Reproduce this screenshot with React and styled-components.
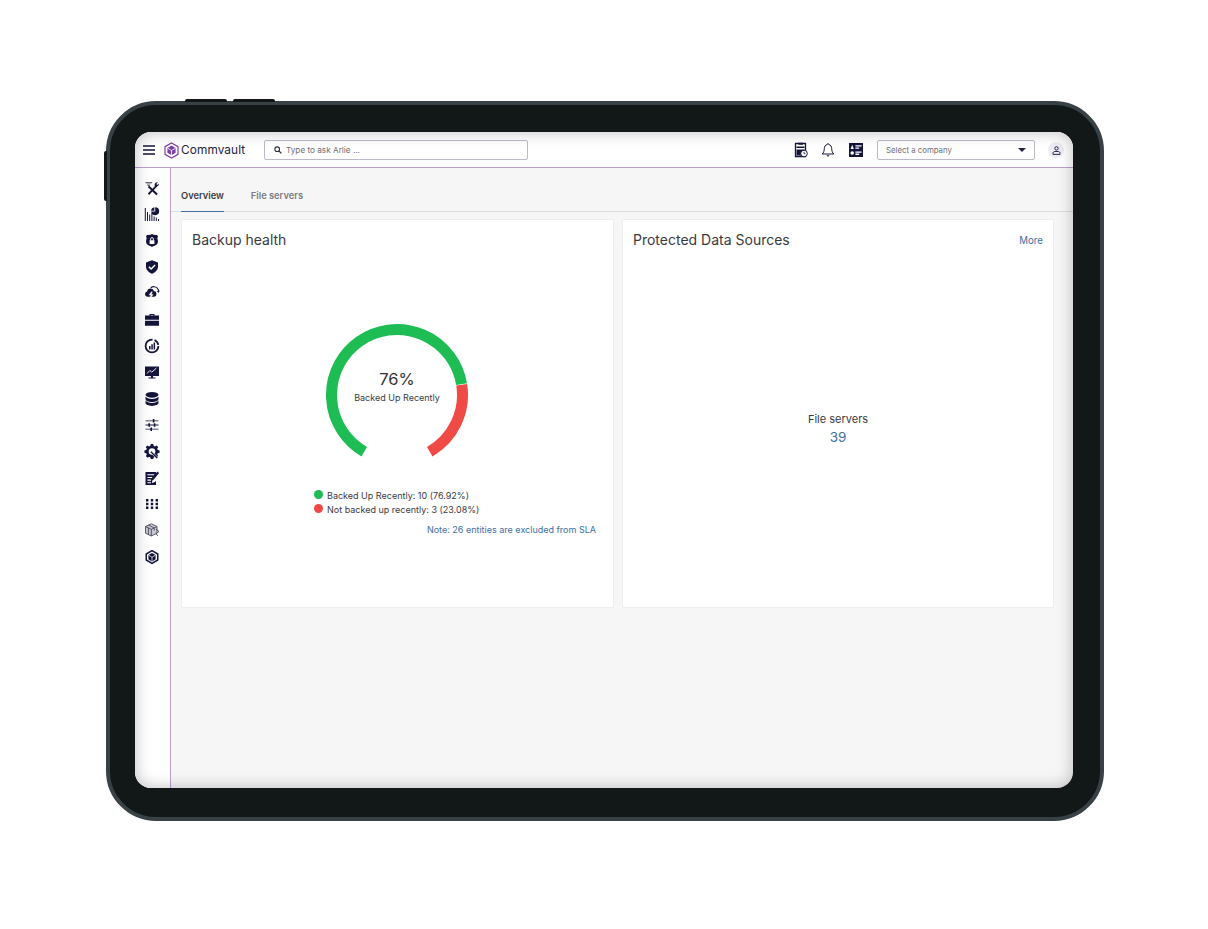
import React from "react";
import styled, { createGlobalStyle } from "styled-components";

const Global = createGlobalStyle`
  html, body { margin: 0; padding: 0; background: #fff; }
  body { font-family: Inter, "Liberation Sans", sans-serif; color: #3a3a3e; }
  * { box-sizing: border-box; }
`;

const NAVY = "#14143c";
const BLUE = "#3f6fa3";
const PURPLE = "#bb9fd2";

const Page = styled.div`
  width: 1208px;
  height: 929px;
  padding: 101px 104px 0 106px;
  overflow: hidden;
`;
const Device = styled.div`
  position: relative;
  width: 998px;
  height: 720px;
  padding: 27px 27px 29px 25px;
  background: #121718;
  border: 4px solid #384146;
  border-radius: 50px;
`;
const SideKey = styled.span`
  position: absolute;
  background: #121718;
  border-radius: 2px 2px 0 0;
  top: -6px;
  height: 3px;
  left: ${(p) => p.$left}px;
  width: ${(p) => p.$width}px;
`;
const PowerKey = styled.span`
  position: absolute;
  left: -6px;
  top: 46px;
  width: 3px;
  height: 50px;
  background: #121718;
  border-radius: 2px 0 0 2px;
`;
const Screen = styled.div`
  position: relative;
  height: 100%;
  border-radius: 16px;
  overflow: hidden;
  background: #f6f6f6;
  display: flex;
  flex-direction: column;
  &::after {
    content: "";
    position: absolute;
    inset: 0;
    border-radius: 16px;
    pointer-events: none;
    box-shadow: inset 0 0 16px rgba(0, 0, 0, 0.25);
  }
`;
const Header = styled.header`
  height: 36px;
  flex: none;
  display: flex;
  align-items: center;
  padding: 1px 9px 0 8px;
  background: #fff;
  border-bottom: 1px solid ${PURPLE};
`;
const Brand = styled.div`
  display: flex;
  align-items: center;
  margin-left: 9px;
  width: 82px;
  gap: 2px;
`;
const BrandName = styled.span`
  font-size: 11.8px;
  font-weight: 400;
  color: #22223a;
  letter-spacing: 0.12px;
`;
const Search = styled.div`
  width: 264px;
  height: 20px;
  margin-left: 18px;
  display: flex;
  align-items: center;
  gap: 3px;
  padding-left: 9px;
  border: 1px solid #bdb9ca;
  border-radius: 2px;
  font-size: 8.2px;
  color: #6d6d75;
`;
const Tools = styled.div`
  margin-left: auto;
  display: flex;
  align-items: center;
`;
const ToolIcon = styled.span`
  display: flex;
  width: 16px;
  justify-content: center;
  margin-right: ${(p) => p.$gap}px;
`;
const Select = styled.div`
  width: 158px;
  height: 20px;
  display: flex;
  align-items: center;
  justify-content: space-between;
  padding: 0 8px;
  border: 1px solid #bdb9ca;
  border-radius: 2px;
  font-size: 7.8px;
  color: #6d6d75;
`;
const Caret = styled.span`
  width: 0;
  height: 0;
  border-left: 4px solid transparent;
  border-right: 4px solid transparent;
  border-top: 4px solid #22223a;
`;
const Avatar = styled.span`
  width: 16px;
  height: 16px;
  margin-left: 13px;
  border-radius: 50%;
  background: #eeecf3;
  display: flex;
  align-items: center;
  justify-content: center;
`;
const Body = styled.div`
  flex: 1;
  display: flex;
  min-height: 0;
`;
const Sidebar = styled.nav`
  width: 36px;
  flex: none;
  background: #fff;
  border-right: 1px solid ${PURPLE};
  display: flex;
  flex-direction: column;
  align-items: center;
  padding-top: 12px;
  padding-right: 2px;
  gap: 10.35px;
`;
const Main = styled.main`
  flex: 1;
  min-width: 0;
`;
const Tabs = styled.div`
  height: 44px;
  display: flex;
  gap: 27px;
  padding-left: 10px;
  border-bottom: 1px solid #dcdcde;
`;
const Tab = styled.div`
  height: 44px;
  padding-top: 22px;
  font-size: 9.3px;
  font-weight: 600;
  color: ${(p) => (p.$active ? "#3c3c44" : "#7b7b82")};
  border-bottom: ${(p) => (p.$active ? `1px solid ${BLUE}` : "none")};
`;
const Cards = styled.div`
  display: flex;
  gap: 8px;
  padding: 7px 0 0 10px;
`;
const Card = styled.section`
  width: ${(p) => p.$width}px;
  height: 389px;
  padding: 11px 10px;
  background: #fff;
  border: 1px solid #eeeeee;
  border-radius: 2px;
  display: flex;
  flex-direction: column;
`;
const CardHead = styled.div`
  display: flex;
  justify-content: space-between;
  align-items: center;
  height: 16px;
`;
const CardTitle = styled.h2`
  margin: 0;
  font-size: 14px;
  font-weight: 400;
  color: #3a3a3e;
`;
const More = styled.a`
  margin-top: 2px;
  font-size: 9.7px;
  color: ${BLUE};
`;
const GaugeWrap = styled.div`
  position: relative;
  width: 144px;
  height: 144px;
  margin: 76px 0 0 133px;
`;
const GaugeText = styled.div`
  position: absolute;
  top: 46px;
  left: 0;
  right: 0;
  display: flex;
  flex-direction: column;
  align-items: center;
`;
const Percent = styled.span`
  font-size: 16.5px;
  line-height: 20px;
  color: #333;
`;
const GaugeLabel = styled.span`
  font-size: 9px;
  line-height: 13px;
  margin-top: 2px;
  color: #3a3a3e;
`;
const Legend = styled.ul`
  list-style: none;
  margin: 21px 0 0 122px;
  padding: 0;
`;
const LegendRow = styled.li`
  height: 14px;
  display: flex;
  align-items: center;
  gap: 4px;
  font-size: 9px;
  color: #3a3a3e;
`;
const Dot = styled.span`
  width: 9px;
  height: 9px;
  border-radius: 50%;
  background: ${(p) => p.$color};
  position: relative;
  top: -1px;
`;
const Note = styled.div`
  margin-top: 8px;
  text-align: right;
  padding-right: 7px;
  font-size: 9px;
  color: ${BLUE};
`;
const Center = styled.div`
  flex: 1;
  display: flex;
  flex-direction: column;
  align-items: center;
  padding-top: 165px;
`;
const SourceLabel = styled.span`
  font-size: 11px;
  line-height: 14px;
  color: #3a3a3e;
`;
const SourceValue = styled.span`
  font-size: 13.5px;
  line-height: 20px;
  margin-top: 1px;
  color: ${BLUE};
`;

const polar = (r, deg) => {
  const a = (deg * Math.PI) / 180;
  return [72 + r * Math.sin(a), 72 - r * Math.cos(a)];
};
const arc = (r, from, to) => {
  const [x1, y1] = polar(r, from);
  const [x2, y2] = polar(r, to);
  const large = to - from > 180 ? 1 : 0;
  return `M${x1} ${y1}A${r} ${r} 0 ${large} 1 ${x2} ${y2}`;
};

const Gauge = () => (
  <svg width="144" height="144" viewBox="0 0 144 144">
    <path d={arc(65.5, -150, 80.4)} fill="none" stroke="#1dbd54" strokeWidth="11" />
    <path d={arc(65.5, 81, 150)} fill="none" stroke="#f04a47" strokeWidth="11" />
  </svg>
);

const Ico = ({ children, s = 16 }) => (
  <svg width={s} height={s} viewBox="0 0 16 16" fill={NAVY} stroke="none" style={{ display: "block" }}>
    {children}
  </svg>
);

const Menu = () => (
  <svg width="12" height="10" viewBox="0 0 12 10" style={{ display: "block" }}>
    <path d="M0 1h12M0 5h12M0 9h12" stroke={NAVY} strokeWidth="1.6" />
  </svg>
);
const Logo = () => (
  <svg width="15" height="17" viewBox="0 0 15 17" style={{ display: "block" }}>
    <path d="M7.5 1 14 4.700v7.600L7.500 16 1 12.300V4.700Z" fill="none" stroke="#7c3fa6" strokeWidth="1.2" />
    <path d="M7.500 3.600 11.600 6v4.800L7.500 13.200 3.400 10.800V6Z" fill="#7c3fa6" />
    <path d="M3.600 6.200 7.500 8.500l4-2.300M7.500 8.500v4.600" fill="none" stroke="#fff" strokeWidth=".8" />
  </svg>
);
const SearchIco = () => (
  <svg width="8" height="8" viewBox="0 0 8 8" style={{ display: "block", margin: "0 1px 0 0" }}>
    <circle cx="3.2" cy="3.2" r="2.3" fill="none" stroke="#30303c" strokeWidth="1.1" />
    <path d="m5 5 2.400 2.400" stroke="#30303c" strokeWidth="1.3" />
  </svg>
);
const ReportClock = () => (
  <Ico>
    <path d="M2.500 1.500h10v13h-10Z" fill="none" stroke={NAVY} strokeWidth="1.3" />
    <path d="M5.500.8h4.500v2H5.500ZM3.500 4.500h8v1.600h-8ZM3.500 7.500h8v6h-8Z" />
    <circle cx="11" cy="11.500" r="3.300" fill="#fff" stroke={NAVY} strokeWidth="1" />
    <path d="M11 9.800v1.800h1.400" fill="none" stroke={NAVY} strokeWidth=".8" />
  </Ico>
);
const Bell = () => (
  <Ico>
    <path d="M8 1.600c-.5 0-.7.3-.7.8C5.200 3 4.400 4.700 4.300 6.500c-.1 2.600-.7 4.200-2 5.500h11.400c-1.300-1.300-1.900-2.900-2-5.500C11.600 4.700 10.800 3 8.700 2.400c0-.5-.2-.8-.7-.8Z" fill="none" stroke={NAVY} strokeWidth="1" />
    <path d="M6.300 13.200h3.400L8 14.800Z" />
  </Ico>
);
const Board = () => (
  <Ico>
    <rect x="1" y="1" width="14" height="14" fill={NAVY} />
    <path d="M2.600 7 4.200 2.800 5.800 7ZM7.400 3.200h6.200v1.400H7.400ZM7.400 5.400h3.800v1.400H7.400ZM7.400 9.400h6.200v1.400H7.400ZM7.400 11.600h3.800V13H7.400Z" fill="#fff" />
    <circle cx="4.200" cy="11" r="1.800" fill="#fff" />
  </Ico>
);
const User = () => (
  <svg width="9" height="9" viewBox="0 0 9 9" style={{ display: "block" }}>
    <circle cx="4.5" cy="2.4" r="1.7" fill="none" stroke={NAVY} strokeWidth=".9" />
    <path d="M1 8.400V7.200c0-1 .8-1.700 1.800-1.700h3.400c1 0 1.800.7 1.800 1.700v1.200Z" fill="none" stroke={NAVY} strokeWidth=".9" />
  </svg>
);

const sideIcons = [
  <Ico key="1">
    <path d="M1 2h7.500L7.400 3.400H2.400ZM3 4.600h3.400L5.500 6H4Z" opacity=".65" />
    <path d="m3.800 13.600 8-8.400 1.300 1.300-8 8.400Z" />
    <path d="m5 5.600 8.800 8.200-1.500 1.400L4 7.200Z" />
    <path d="M10.600 5.400c-.3-1.800 1.200-3.400 3.200-3l-1.500 1.600 1 1 1.600-1.400c.2 1.800-1.200 3.300-3 3Z" />
  </Ico>,
  <Ico key="2">
    <path d="M.8 2h1v13h-1ZM3 6h1v9H3ZM5.200 8.500h1V15h-1ZM7.400 7h1v8h-1ZM9.600 10.500h1V15h-1ZM11.800 11.500h1V15h-1ZM14 13h1v2h-1Z" />
    <path d="M11.200 1.200a4 4 0 1 1-4 4.300h4Z" />
    <path d="M10.400 1.300v3.400H7.100a3.900 3.900 0 0 1 3.300-3.400Z" />
  </Ico>,
  <Ico key="3">
    <path d="M8 1c1.600 1 3.300 1.200 5 .8l1 1.700c-.8 1.200-.7 2.200-.2 3.600.7 2.500-.4 4.900-3.200 5.600-1 .3-2 .7-2.600 1.300-.6-.6-1.600-1-2.600-1.300C2.600 12 1.500 9.600 2.200 7.100c.5-1.400.6-2.400-.2-3.600l1-1.700c1.700.4 3.400.2 5-.8Z" />
    <path d="M5.600 7.300h4.800v3.600H5.600Z" fill="#fff" />
    <path d="M6.600 7.300V6a1.400 1.400 0 0 1 2.800 0v1.300" fill="none" stroke="#fff" strokeWidth=".9" />
  </Ico>,
  <Ico key="4">
    <path d="M8 1.200 14 3.400v4.200c0 3.300-2.500 5.900-6 7.200-3.500-1.300-6-3.900-6-7.200V3.400Z" />
    <path d="m4.900 7.800 2.200 2.200 4-4" fill="none" stroke="#fff" strokeWidth="1.5" />
  </Ico>,
  <Ico key="5">
    <path d="M3.400 11.800a2.700 2.700 0 0 1-.4-5.300 3.600 3.600 0 0 1 6.900-.6 3 3 0 0 1 .3 5.900Z" />
    <path d="M7.300 6.800 5 10.100h1.700l-1 4L9.200 9.500H7.400l1-2.700Z" fill="#fff" stroke="#fff" strokeWidth=".3" />
    <path d="M6.800 2.800c1.800-1.600 4.800-1.500 6.500.3 1 1.100 1.400 2.500 1.200 3.800" fill="none" stroke={NAVY} strokeWidth="1.1" />
    <path d="m12.700 6.100 1.800 1.900 1.100-2.300Z" />
  </Ico>,
  <Ico key="6">
    <path d="M5.500 3.600V2h5v1.600H15v4.100H1V3.600ZM6.600 3.600h2.800V3H6.600ZM1 8.700h14v5H1Z" />
  </Ico>,
  <Ico key="7">
    <circle cx="8" cy="8" r="6.400" fill="none" stroke={NAVY} strokeWidth="1.8" strokeDasharray="30 2 6 2" />
    <path d="M5 8h1.500v3.500H5ZM7.300 6.300h1.500v5.200H7.300ZM9.600 4.500h1.500v7H9.600Z" />
  </Ico>,
  <Ico key="8">
    <path d="M1 2.500h14v9.500H1ZM7 12h2v1.500h2.500v1h-7v-1H7Z" />
    <path d="m3 9.500 2.800-3 2 1.600 4.600-4" fill="none" stroke="#fff" strokeWidth=".9" />
  </Ico>,
  <Ico key="9">
    <ellipse cx="8" cy="3.800" rx="6.500" ry="2.900" />
    <path d="M1.500 5.500c1 1.600 3.400 2.400 6.500 2.400s5.500-.8 6.500-2.400v2.600c0 1.700-2.900 3-6.500 3s-6.500-1.300-6.500-3Z" />
    <path d="M1.500 9.600c1 1.600 3.400 2.300 6.500 2.300s5.500-.7 6.500-2.300v2.200c0 1.800-2.900 3.100-6.500 3.100s-6.500-1.300-6.500-3.100Z" />
  </Ico>,
  <Ico key="10">
    <path d="M1.500 3.400h13v.8h-13ZM1.500 7.600h13v.8h-13ZM1.500 11.800h13v.8h-13Z" />
    <path d="M8.800 2h1.600v3.600H8.800ZM4.400 6.200H6v3.600H4.400ZM9.800 6.200h1.600v3.600H9.800ZM6.400 10.400H8V14H6.400Z" />
  </Ico>,
  <Ico key="11">
    <path d="m6.800 1 2.400 0 .4 1.800 1.300.6 1.600-1 1.700 1.700-1 1.600.6 1.300 1.800.4v2.400l-1.800.4-.6 1.300 1 1.600-1.700 1.700-1.600-1-1.300.6-.4 1.800H6.800l-.4-1.800-1.300-.6-1.600 1-1.700-1.700 1-1.600-.6-1.300L.4 9.800V7.400l1.800-.4.6-1.300-1-1.600 1.700-1.700 1.600 1 1.300-.6Z" />
    <circle cx="8" cy="8.500" r="3.300" fill="#fff" />
    <path d="m7.300 8 6.900 6.500-1.600 1.300L5.900 9Z" stroke="#fff" strokeWidth=".6" />
  </Ico>,
  <Ico key="12">
    <path d="M1.500 2h10.500v3.200L8.500 9.500 8 13l3-1 1-1.200V15H1.500Z" />
    <path d="M3.400 4.200h6.800v1.100H3.400ZM3.400 6.900h4.800V8H3.400ZM3.400 9.600h3.600v1.100H3.400ZM3.400 12.200h3.600v1.100H3.400Z" fill="#fff" />
    <path d="m13.400 1.500 1.700 1.500-5.500 6.800-2 .7.300-2.100Z" />
  </Ico>,
  <Ico key="13">
    <path d="M2 3h2.400v2.400H2ZM6.800 3h2.400v2.400H6.800ZM11.600 3H14v2.400h-2.400ZM2 6.800h2.400v2.400H2ZM6.800 6.800h2.400v2.400H6.800ZM11.600 6.800H14v2.400h-2.400ZM2 10.600h2.400V13H2ZM6.800 10.600h2.400V13H6.800ZM11.600 10.600H14V13h-2.400Z" />
  </Ico>,
  <Ico key="14">
    <g fill="none" stroke="#4a4a60" strokeWidth=".9">
      <path d="M1.500 4.500 7.300 1.800 13 4.500v6.700L7.300 14l-5.800-2.800Z" fill="#c9c9d2" />
      <path d="m1.500 4.500 5.800 2.800L13 4.500M7.300 7.300V14M4.400 3.100l5.800 2.800v2.600M4.400 5.900v6.700" />
      <path d="m12 7.200 3 2.200-3 2.300 1.800 2.300" />
    </g>
  </Ico>,
  <Ico key="15">
    <path d="M8 .8 14.500 4.500v7L8 15.200 1.500 11.500v-7Z" />
    <path d="M8 2.600 13 5.400v5.200l-5 2.800-5-2.800V5.400Z" fill="#fff" />
    <path d="M8 4 11.600 6.100v4.200L8 12.400 4.400 10.300V6.100Z" />
    <path d="M4.400 6.100 8 8.200l3.600-2.100M8 8.200v4.200" fill="none" stroke="#fff" strokeWidth=".7" />
  </Ico>,
];

export default function App() {
  return (
    <Page>
      <Global />
      <Device>
        <SideKey $left={75} $width={42} />
        <SideKey $left={123} $width={42} />
        <PowerKey />
        <Screen>
          <Header>
            <Menu />
            <Brand>
              <Logo />
              <BrandName>Commvault</BrandName>
            </Brand>
            <Search>
              <SearchIco />
              Type to ask Arlie ...
            </Search>
            <Tools>
              <ToolIcon $gap={11}><ReportClock /></ToolIcon>
              <ToolIcon $gap={12}><Bell /></ToolIcon>
              <ToolIcon $gap={13}><Board /></ToolIcon>
              <Select>
                Select a company
                <Caret />
              </Select>
              <Avatar><User /></Avatar>
            </Tools>
          </Header>
          <Body>
            <Sidebar>{sideIcons}</Sidebar>
            <Main>
              <Tabs>
                <Tab $active>Overview</Tab>
                <Tab>File servers</Tab>
              </Tabs>
              <Cards>
                <Card $width={433}>
                  <CardHead>
                    <CardTitle>Backup health</CardTitle>
                  </CardHead>
                  <GaugeWrap>
                    <Gauge />
                    <GaugeText>
                      <Percent>76%</Percent>
                      <GaugeLabel>Backed Up Recently</GaugeLabel>
                    </GaugeText>
                  </GaugeWrap>
                  <Legend>
                    <LegendRow><Dot $color="#1dbd54" />Backed Up Recently: 10 (76.92%)</LegendRow>
                    <LegendRow><Dot $color="#f04a47" />Not backed up recently: 3 (23.08%)</LegendRow>
                  </Legend>
                  <Note>Note: 26 entities are excluded from SLA</Note>
                </Card>
                <Card $width={432}>
                  <CardHead>
                    <CardTitle>Protected Data Sources</CardTitle>
                    <More>More</More>
                  </CardHead>
                  <Center>
                    <SourceLabel>File servers</SourceLabel>
                    <SourceValue>39</SourceValue>
                  </Center>
                </Card>
              </Cards>
            </Main>
          </Body>
        </Screen>
      </Device>
    </Page>
  );
}
